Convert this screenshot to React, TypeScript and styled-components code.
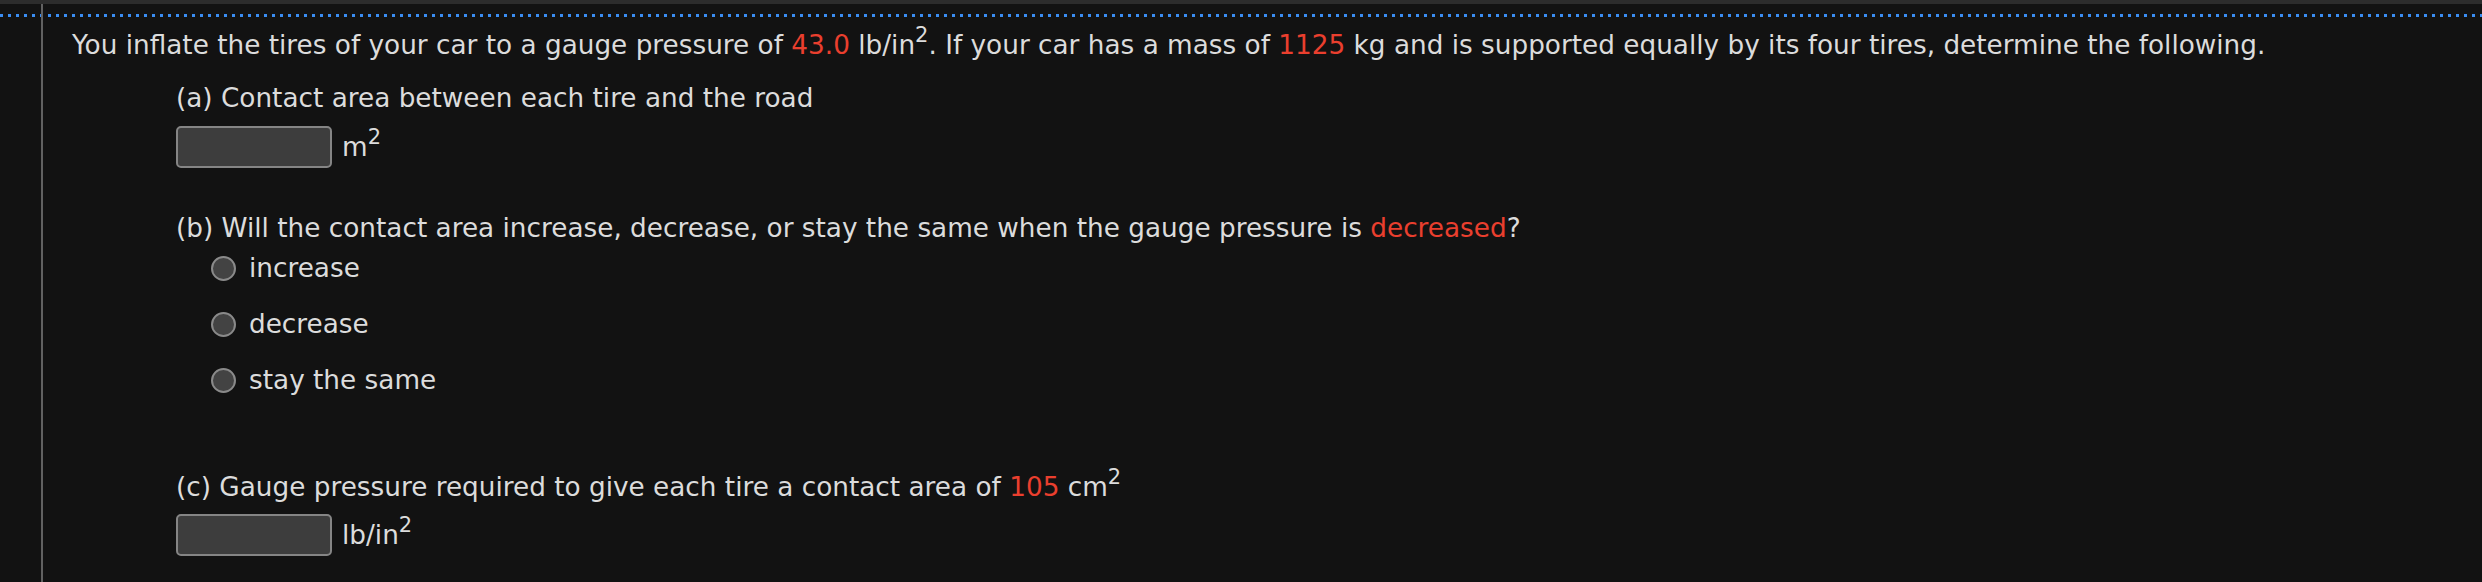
import React from "react";
import styled, { createGlobalStyle } from "styled-components";

const Global = createGlobalStyle`
  html, body {
    margin: 0;
    padding: 0;
    background: #121212;
  }
  body {
    font-family: "DejaVu Sans", Verdana, sans-serif;
    color: #dcdcdc;
  }
`;

const Page = styled.div`
  position: relative;
  min-height: 582px;
  background: #121212;
  &::before {
    content: "";
    position: absolute;
    left: 41px;
    top: 4px;
    bottom: 0;
    width: 2px;
    background: #616161;
  }
`;

const TopBar = styled.div`
  height: 4px;
  background: #2c2c2c;
`;

const DottedRule = styled.div`
  margin-top: 10px;
  height: 3px;
  background-image: linear-gradient(to right, #3a8df2 0 3px, transparent 3px);
  background-size: 8px 3px;
  background-repeat: repeat-x;
`;

const Content = styled.div`
  padding-left: 72px;
  font-size: 26.3px;
  line-height: 36px;
`;

const Intro = styled.p`
  margin: 10px 0 0;
  white-space: nowrap;
`;

const Part = styled.div<{ $top: number }>`
  margin-top: ${(p) => p.$top}px;
  padding-left: 104px;
`;

const Label = styled.div`
  white-space: nowrap;
`;

const Red = styled.span`
  color: #ea3f2e;
`;

const Sup = styled.span`
  font-size: 0.8em;
  position: relative;
  top: -0.55em;
  line-height: 0;
`;

const AnswerRow = styled.div<{ $top: number }>`
  display: flex;
  align-items: center;
  gap: 10px;
  margin-top: ${(p) => p.$top}px;
`;

const Field = styled.div`
  box-sizing: border-box;
  width: 156px;
  height: 42px;
  background: #3d3d3d;
  border: 2px solid #858585;
  border-radius: 5px;
`;

const Unit = styled.span`
  white-space: nowrap;
`;

const Options = styled.div`
  display: flex;
  flex-direction: column;
  gap: 20px;
  margin-top: 4px;
  padding-left: 35px;
`;

const Option = styled.label`
  display: flex;
  align-items: center;
  gap: 13px;
  height: 36px;
`;

const Radio = styled.span`
  box-sizing: border-box;
  width: 25px;
  height: 25px;
  border-radius: 50%;
  background: #434343;
  border: 2px solid #8a8a8a;
  flex: none;
`;

export default function App() {
  return (
    <>
      <Global />
      <Page>
        <TopBar />
        <DottedRule />
        <Content>
          <Intro>
            You inflate the tires of your car to a gauge pressure of <Red>43.0</Red> lb/in
            <Sup>2</Sup>. If your car has a mass of <Red>1125</Red> kg and is supported equally by
            its four tires, determine the following.
          </Intro>

          <Part $top={17}>
            <Label>(a) Contact area between each tire and the road</Label>
            <AnswerRow $top={10}>
              <Field />
              <Unit>
                m<Sup>2</Sup>
              </Unit>
            </AnswerRow>
          </Part>

          <Part $top={42}>
            <Label>
              (b) Will the contact area increase, decrease, or stay the same when the gauge
              pressure is <Red>decreased</Red>?
            </Label>
            <Options>
              {["increase", "decrease", "stay the same"].map((o) => (
                <Option key={o}>
                  <Radio />
                  {o}
                </Option>
              ))}
            </Options>
          </Part>

          <Part $top={71}>
            <Label>
              (c) Gauge pressure required to give each tire a contact area of <Red>105</Red> cm
              <Sup>2</Sup>
            </Label>
            <AnswerRow $top={9}>
              <Field />
              <Unit>
                lb/in<Sup>2</Sup>
              </Unit>
            </AnswerRow>
          </Part>
        </Content>
      </Page>
    </>
  );
}
